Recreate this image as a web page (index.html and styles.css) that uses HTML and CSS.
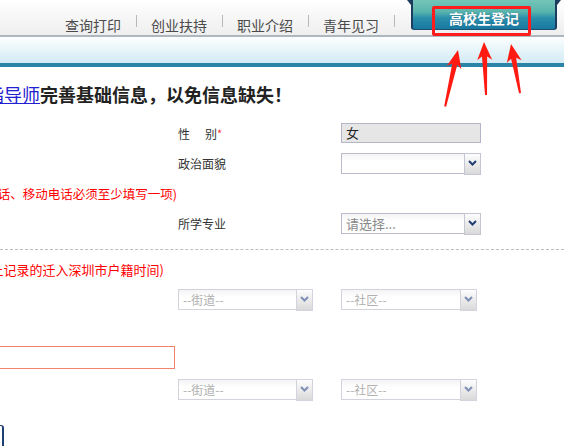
FILE: index.html
```html
<!DOCTYPE html>
<html lang="zh-CN">
  <head>
    <meta charset="UTF-8" />
    <meta name="viewport" content="width=device-width, initial-scale=1.0" />
    <title>高校生登记</title>
    <link rel="stylesheet" href="styles.css">
  </head>
  <body>
    <!-- Top navigation -->
    <div class="topbar">
      <nav class="nav">
        <a href="#">查询打印</a><span class="nav-sep"></span>
        <a href="#">创业扶持</a><span class="nav-sep"></span>
        <a href="#">职业介绍</a><span class="nav-sep"></span>
        <a href="#">青年见习</a><span class="nav-sep"></span>
      </nav>
      <a href="#" class="tab">高校生登记</a>
    </div>
    <div class="subbar"></div>

    <!-- Form -->
    <div class="content">
      <h2 class="notice"><a href="#">职业指导师</a>完善基础信息，以免信息缺失！</h2>

      <div class="row">
        <div class="left"></div>
        <label class="label">性<span class="label-gap"></span>别<span class="req">*</span></label>
        <div class="field-text">女</div>
      </div>

      <div class="row">
        <div class="left"></div>
        <label class="label">政治面貌</label>
        <div class="select">
          <span class="select-text"></span>
          <span class="select-btn">
            <svg width="9" height="6" viewBox="0 0 9 6"><polyline points="1,1 4.5,4.5 8,1" /></svg>
          </span>
        </div>
      </div>

      <div class="row">
        <div class="note note-phone"><span>(固定电话、移动电话必须至少填写一项)</span></div>
      </div>

      <div class="row">
        <div class="left"></div>
        <label class="label">所学专业</label>
        <div class="select">
          <span class="select-text placeholder">请选择...</span>
          <span class="select-btn">
            <svg width="9" height="6" viewBox="0 0 9 6"><polyline points="1,1 4.5,4.5 8,1" /></svg>
          </span>
        </div>
      </div>

      <div class="divider"></div>

      <div class="row">
        <div class="note note-hukou"><span>(以户口本上记录的迁入深圳市户籍时间)</span></div>
      </div>

      <div class="row">
        <div class="left"></div>
        <div class="select select-street is-disabled">
          <span class="select-text">--街道--</span>
          <span class="select-btn">
            <svg width="9" height="6" viewBox="0 0 9 6"><polyline points="1,1 4.5,4.5 8,1" /></svg>
          </span>
        </div>
        <div class="select select-community is-disabled">
          <span class="select-text">--社区--</span>
          <span class="select-btn">
            <svg width="9" height="6" viewBox="0 0 9 6"><polyline points="1,1 4.5,4.5 8,1" /></svg>
          </span>
        </div>
      </div>

      <div class="row"></div>

      <div class="row row-top">
        <input type="text" class="input-error" />
      </div>

      <div class="row">
        <div class="left"></div>
        <div class="select select-street is-disabled">
          <span class="select-text">--街道--</span>
          <span class="select-btn">
            <svg width="9" height="6" viewBox="0 0 9 6"><polyline points="1,1 4.5,4.5 8,1" /></svg>
          </span>
        </div>
        <div class="select select-community is-disabled">
          <span class="select-text">--社区--</span>
          <span class="select-btn">
            <svg width="9" height="6" viewBox="0 0 9 6"><polyline points="1,1 4.5,4.5 8,1" /></svg>
          </span>
        </div>
      </div>

      <div class="bottom-btn"></div>
    </div>

    <!-- Red annotation over the tab -->
    <div class="mark-box"></div>
    <svg class="mark-arrows" width="564" height="446" viewBox="0 0 564 446">
      <g transform="translate(458 50) rotate(12.8)">
        <polygon points="0,0 7.5,18 2.6,14.5 1,58 -1,58 -2.6,14.5 -7.5,18" />
      </g>
      <g transform="translate(484 42) rotate(-2.2)">
        <polygon points="0,0 7.5,18 2.6,14.5 1,53 -1,53 -2.6,14.5 -7.5,18" />
      </g>
      <g transform="translate(511 44) rotate(-10.4)">
        <polygon points="0,0 7.5,18 2.6,14.5 1,50 -1,50 -2.6,14.5 -7.5,18" />
      </g>
    </svg>
  </body>
</html>
```

FILE: styles.css
```css
/* Global */
body {
  margin: 0;
  font-family: "Noto Sans CJK SC", "Noto Sans", sans-serif;
  color: #333;
  background: #fff;
  overflow: hidden;
}

/* Top bar */
.topbar {
  display: flex;
  height: 35px;
  background: linear-gradient(#ffffff, #eeeeee);
  border-bottom: 2px solid #aeb7bd;
}

.nav {
  display: flex;
  align-items: flex-start;
  padding-left: 65px;
}

.nav a {
  margin-top: 17px;
  font-size: 14px;
  line-height: 16px;
  color: #4a4a4a;
  text-decoration: none;
}

.nav-sep {
  width: 1px;
  height: 12px;
  margin: 15px 14px 0 15px;
  background: #b8b8b8;
}

.tab {
  position: relative;
  margin-left: auto;
  margin-right: 7px;
  width: 146px;
  height: 30px;
  box-sizing: border-box;
  padding-top: 10px;
  background: linear-gradient(#74c5b8 0%, #5ab5ad 40%, #2b8fab 62%, #1878a1 100%);
  border-left: 2px solid #1d3d5e;
  border-right: 2px solid #1d3d5e;
  border-bottom: 1px solid #1d4e70;
  border-radius: 0 0 3px 3px;
  color: #fff;
  font-size: 14px;
  font-weight: bold;
  line-height: 16px;
  text-align: center;
  text-decoration: none;
  text-shadow: 0 0 1px rgba(0, 40, 70, 0.5);
}

.tab::before,
.tab::after {
  content: "";
  position: absolute;
  top: 0;
  width: 0;
  height: 0;
  border-top: 5px solid #1d3d5e;
}

.tab::before {
  left: -6px;
  border-left: 4px solid transparent;
}

.tab::after {
  right: -6px;
  border-right: 4px solid transparent;
}

.subbar {
  height: 26px;
  background: linear-gradient(#fcfeff, #d2ebf4);
  border-bottom: 4px solid #2a84a8;
}

/* Content */
.notice {
  margin: 15px 0 12px -50px;
  font-size: 18px;
  line-height: 24px;
  font-weight: bold;
  color: #222;
  white-space: nowrap;
}

.notice a {
  color: #2020d0;
  font-weight: normal;
}

.row {
  display: flex;
  align-items: center;
  height: 30px;
}

.row-top {
  align-items: flex-start;
}

.left {
  flex: none;
  width: 178px;
}

.label {
  flex: none;
  width: 163px;
  font-size: 12px;
  color: #333;
}

.label-gap {
  display: inline-block;
  width: 15px;
}

.req {
  color: #f33;
  font-size: 11px;
  vertical-align: top;
}

.field-text {
  width: 140px;
  height: 20px;
  box-sizing: border-box;
  padding-left: 4px;
  border: 1px solid #b3b6c8;
  background: #e6e6e6;
  font-size: 13px;
  line-height: 18px;
  color: #222;
}

/* Select boxes */
.select {
  display: flex;
  width: 140px;
  height: 21px;
  box-sizing: border-box;
  border: 1px solid #b9bccb;
  background: linear-gradient(#f4f4f4, #ffffff 40%);
}

.select-text {
  flex: 1;
  padding-left: 4px;
  font-size: 13px;
  line-height: 19px;
  color: #222;
  white-space: nowrap;
}

.select-text.placeholder {
  color: #888;
}

.select-btn {
  flex: none;
  display: flex;
  justify-content: center;
  padding-top: 6px;
  width: 17px;
  height: 22px;
  box-sizing: border-box;
  margin: -1px -1px 0 0;
  border: 1px solid #c4c6d2;
  background: linear-gradient(#fdfdfd, #d9d9d9);
}

.select-btn polyline {
  fill: none;
  stroke: #243f72;
  stroke-width: 2;
}

.select-street {
  width: 135px;
}

.select-community {
  width: 136px;
  margin-left: 28px;
}

.select.is-disabled {
  border-color: #d2d3dc;
}

.is-disabled .select-text {
  font-size: 12px;
  color: #b0b0b0;
}

.is-disabled .select-btn {
  border-color: #d2d3dc;
}

.is-disabled .select-btn polyline {
  stroke: #7f8fb5;
}

/* Notes */
.note {
  display: flex;
  justify-content: flex-end;
  flex: none;
  white-space: nowrap;
  color: #f00;
}

.note-phone {
  width: 177px;
  font-size: 12.5px;
}

.note-hukou {
  width: 164px;
  font-size: 13px;
}

.divider {
  margin: 11px 0 4px;
  border-top: 1px dashed #bdbdbd;
}

.input-error {
  display: block;
  width: 200px;
  height: 23px;
  margin: 2px 0 0 -25px;
  box-sizing: border-box;
  border: 1px solid #f4806f;
  outline: none;
}

.bottom-btn {
  width: 4px;
  height: 22px;
  margin-top: 21px;
  box-sizing: border-box;
  border-top: 1px solid #1e3f73;
  border-right: 2px solid #1e3f73;
  border-radius: 0 3px 0 0;
}

/* Annotation */
.mark-box {
  position: absolute;
  left: 432px;
  top: 6px;
  width: 99px;
  height: 30px;
  box-sizing: border-box;
  border: 3px solid #ff1c1c;
  border-radius: 2px;
}

.mark-arrows {
  position: absolute;
  left: 0;
  top: 0;
  pointer-events: none;
}

.mark-arrows polygon {
  fill: #ff1a12;
}
```
